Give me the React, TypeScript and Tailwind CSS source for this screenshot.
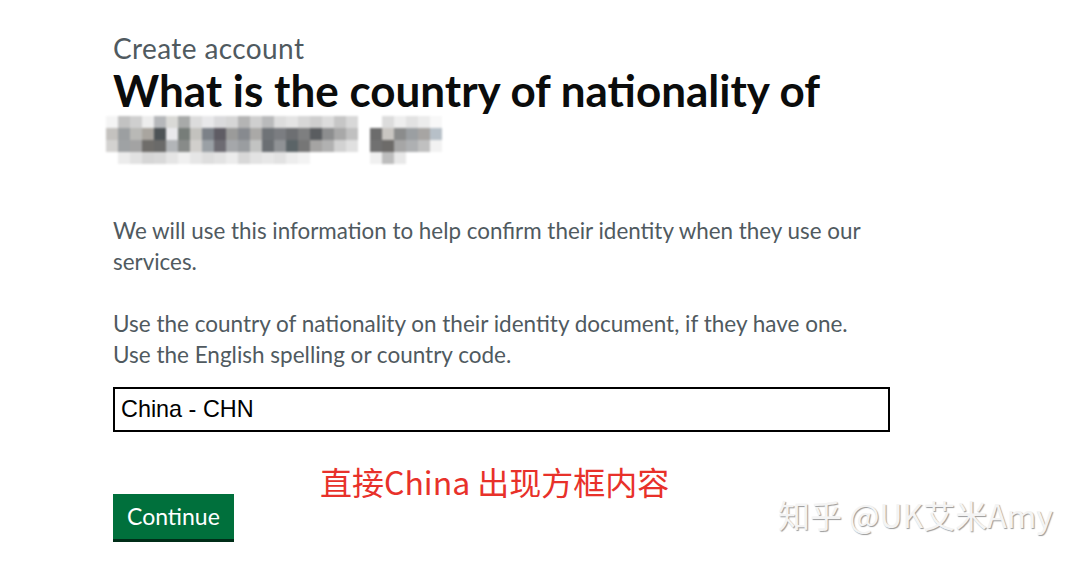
import React from 'react';

const mosaic: string[][] = [
  ['#f4f4f4', '#c2c2c2', '#cfcfcf', '#ededed', '#b5b7ba', '#d9d9d6', '#a8aaa9', '#dcdcdc', '#e8e8ea', '#dadadc', '#d6d6d6', '#b4b4b4', '#cfcfcf', '#b9babb', '#dddddd', '#e4e4e4', '#d7d7d7', '#cecece', '#dcdcdc', '#c6c6c6', '#d8d8d8', '#ffffff', '#ffffff', '#dcdcdc', '#eeeeee', '#e2e2e2', '#ececec', '#f8f8f8'],
  ['#c4c2bf', '#9c9fa1', '#b9b9b6', '#a9a59f', '#4d5356', '#e9e9ec', '#777d79', '#c3c2be', '#7c8188', '#5f5c64', '#9b9b9a', '#878a8f', '#aaa9a7', '#6f7377', '#7b7d81', '#6d6f72', '#7e7f80', '#5a5d60', '#8d8e8f', '#a8a8a8', '#c0c0c0', '#ffffff', '#6c6c6c', '#c9c6c2', '#8b8c8c', '#9b9fa2', '#a7a5a3', '#b7c0c8'],
  ['#d3d2d0', '#9fa2a4', '#a3a3a3', '#6f6d6a', '#6a6a69', '#b2b5b8', '#888b89', '#d1cfcc', '#9aa0a5', '#6d6b72', '#a5a7aa', '#9a9da0', '#c2c3c2', '#6b6f73', '#8f9295', '#5b6467', '#767676', '#a5a4a3', '#b1b1b1', '#d2d2d2', '#e0e0e0', '#ffffff', '#717171', '#6d6b69', '#a6a6a6', '#aeb0b2', '#c0c0c0', '#f2f2f2'],
  ['#ffffff', '#ececec', '#e2e2e2', '#d6d6d6', '#d9d9d9', '#e5e5e5', '#f0f0f0', '#e6e6e6', '#dedede', '#e3e3e3', '#ececec', '#d8d8d8', '#e3e3e3', '#e7e7e7', '#e2e2e2', '#ededed', '#f3f3f3', '#ffffff', '#ffffff', '#ffffff', '#ffffff', '#ffffff', '#f0f0f0', '#bdbdbd', '#e8e8e8', '#ffffff', '#ffffff', '#ffffff'],
];

function BlurredName() {
  return (
    <svg width={336} height={48} viewBox="0 0 336 48" className="block" style={{ filter: 'blur(0.8px)' }}>
      {mosaic.map((row, r) =>
        row.map((c, i) => <rect key={`${r}-${i}`} x={i * 12} y={r * 12} width={12} height={12} fill={c} />)
      )}
    </svg>
  );
}

export default function App() {
  return (
    <div className="relative w-[1080px] h-[563px] overflow-hidden bg-white font-['Lato',sans-serif]">
      <div className="pl-[113px] pt-[32px]">
        <p className="text-[28px] leading-[32px] tracking-[0.4px] text-[#505a5f]">Create account</p>
        <h1 className="mt-[2px] text-[44px] leading-[48px] font-bold text-[#0b0c0c]">
          What is the country of nationality of
        </h1>
        <div className="mt-[2px] -ml-[7px]">
          <BlurredName />
        </div>

        <p className="mt-[51px] w-[780px] text-[22.4px] leading-[31px] text-[#505a5f]">
          We will use this information to help confirm their identity when they use our services.
        </p>
        <p className="mt-[31px] text-[22.5px] leading-[31px] text-[#505a5f]">
          Use the country of nationality on their identity document, if they have one.
          <br />
          Use the English spelling or country code.
        </p>

        <div className="mt-[17px] w-[777px] h-[45px] border-2 border-black flex items-center px-[6px] font-['Liberation_Sans',Arial,sans-serif] text-[23.4px] text-black">
          China - CHN
        </div>

        <div className="relative mt-[62px]">
          <button className="h-[45px] px-[14px] bg-[#00703c] text-white text-[23px] shadow-[0_3px_0_#002d18]">
            Continue
          </button>
          <span className="absolute left-[207px] -top-[33px] text-[32px] leading-[40px] text-[#e8312a] font-['Noto_Sans_CJK_SC','Noto_Sans',sans-serif]">
            直接China 出现方框内容
          </span>
        </div>
      </div>

      <span className="absolute left-[778px] top-[494px] text-[32px] leading-[40px] text-[#f4f4f4] font-['Noto_Sans_CJK_SC','Noto_Sans',sans-serif] [text-shadow:1px_1px_1px_#9a9a9a]">
        知乎 @UK艾米Amy
      </span>
    </div>
  );
}
